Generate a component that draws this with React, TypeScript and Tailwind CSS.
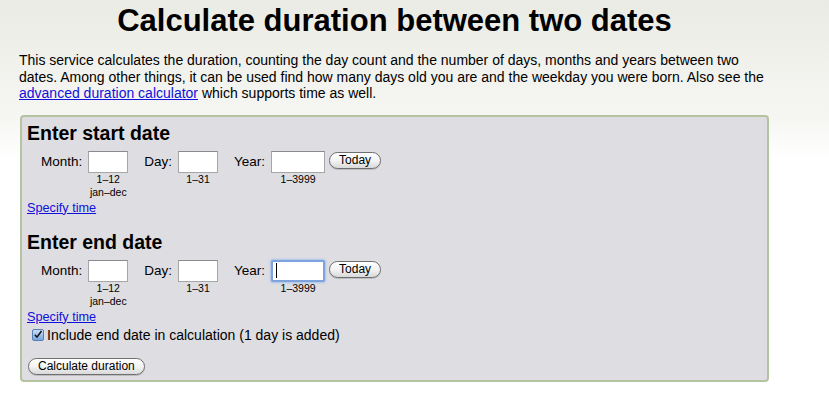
import React from "react";

const font = { fontFamily: '"Liberation Sans", Arial, Helvetica, sans-serif' };

function Field({
  label,
  width,
  hints,
  focused = false,
}: {
  label: string;
  width: string;
  hints: string[];
  focused?: boolean;
}) {
  return (
    <div className="flex items-start">
      <span className="text-[13.5px] leading-[22px] mr-[6px]">{label}</span>
      <div className="flex flex-col items-center">
        <div className="relative flex">
          <input
            type="text"
            readOnly
            className={
              focused
                ? `${width} h-[22px] bg-white border-2 border-[#7fa3dc] rounded-[2px] shadow-[0_0_2px_1px_#a9c4ec] outline-none`
                : `${width} h-[22px] bg-white border border-[#a6a6a6] border-t-[#8a8a8a] outline-none`
            }
          />
          {focused && (
            <span className="absolute left-[5px] top-[3px] h-[15px] w-px bg-black" />
          )}
        </div>
        <div className="text-[10.5px] leading-[13px] text-center">
          {hints.map((h) => (
            <div key={h}>{h}</div>
          ))}
        </div>
      </div>
    </div>
  );
}

function PillButton({ children }: { children: React.ReactNode }) {
  return (
    <button
      type="button"
      className="flex items-center h-[17px] px-[9px] rounded-full border border-[#6f6f6f] bg-gradient-to-b from-white via-[#f4f4f4] to-[#d9d9d9] text-[12px] leading-[15px] text-black shadow-[0_1px_0_rgba(0,0,0,0.15)]"
    >
      {children}
    </button>
  );
}

function DateBlock({ title, focusYear = false }: { title: string; focusYear?: boolean }) {
  return (
    <div>
      <h2 className="text-[19.5px] leading-[22px] font-bold">{title}</h2>
      <div className="flex items-start mt-[7px] pl-[14px]">
        <Field label="Month:" width="w-[40px]" hints={["1–12", "jan–dec"]} />
        <div className="ml-[16px]">
          <Field label="Day:" width="w-[40px]" hints={["1–31"]} />
        </div>
        <div className="ml-[16px]">
          <Field label="Year:" width="w-[54px]" hints={["1–3999"]} focused={focusYear} />
        </div>
        <div className="flex ml-[4px] mt-[1px]">
          <PillButton>Today</PillButton>
        </div>
      </div>
      <a
        href="#"
        className="block w-fit mt-[2px] text-[12.7px] leading-[15px] text-[#1010dd] underline"
      >
        Specify time
      </a>
    </div>
  );
}

export default function App() {
  return (
    <div
      className="min-h-[398px] w-[829px] bg-gradient-to-b from-[#ebebe5] via-[#f6f6f3] via-30% to-white to-40% text-black"
      style={font}
    >
      <div className="w-[751px] ml-[19px] pb-4">
        <h1 className="text-[31px] leading-[36px] font-bold text-center pt-[3px]">
          Calculate duration between two dates
        </h1>
        <p className="mt-[13px] text-[14px] leading-[16.5px]">
          This service calculates the duration, counting the day count and the number of days,
          months and years between two dates. Among other things, it can be used find how many
          days old you are and the weekday you were born. Also see the{" "}
          <a href="#" className="text-[#1010dd] underline">
            advanced duration calculator
          </a>{" "}
          which supports time as well.
        </p>
        <form className="mt-[13px] ml-px w-[749px] h-[267px] bg-[#dedde1] border-2 border-[#b4c4a0] rounded-[4px] px-[5px] pt-[5px]">
          <DateBlock title="Enter start date" />
          <div className="mt-[15px]">
            <DateBlock title="Enter end date" focusYear />
          </div>
          <label className="flex items-center mt-[2px] ml-[5px] text-[14px] leading-[16px]">
            <span className="w-[12px] h-[12px] mr-[3px] rounded-[2px] border border-[#5b7fb4] bg-gradient-to-b from-[#c9def6] to-[#77a6e0] flex items-center justify-center">
              <svg viewBox="0 0 12 12" className="w-[11px] h-[11px]">
                <path d="M2.2 6.2 L4.8 9.2 L10.2 1.8" fill="none" stroke="#111" strokeWidth="1.8" />
              </svg>
            </span>
            Include end date in calculation (1 day is added)
          </label>
          <div className="flex mt-[15px] ml-px">
            <PillButton>Calculate duration</PillButton>
          </div>
        </form>
      </div>
    </div>
  );
}
